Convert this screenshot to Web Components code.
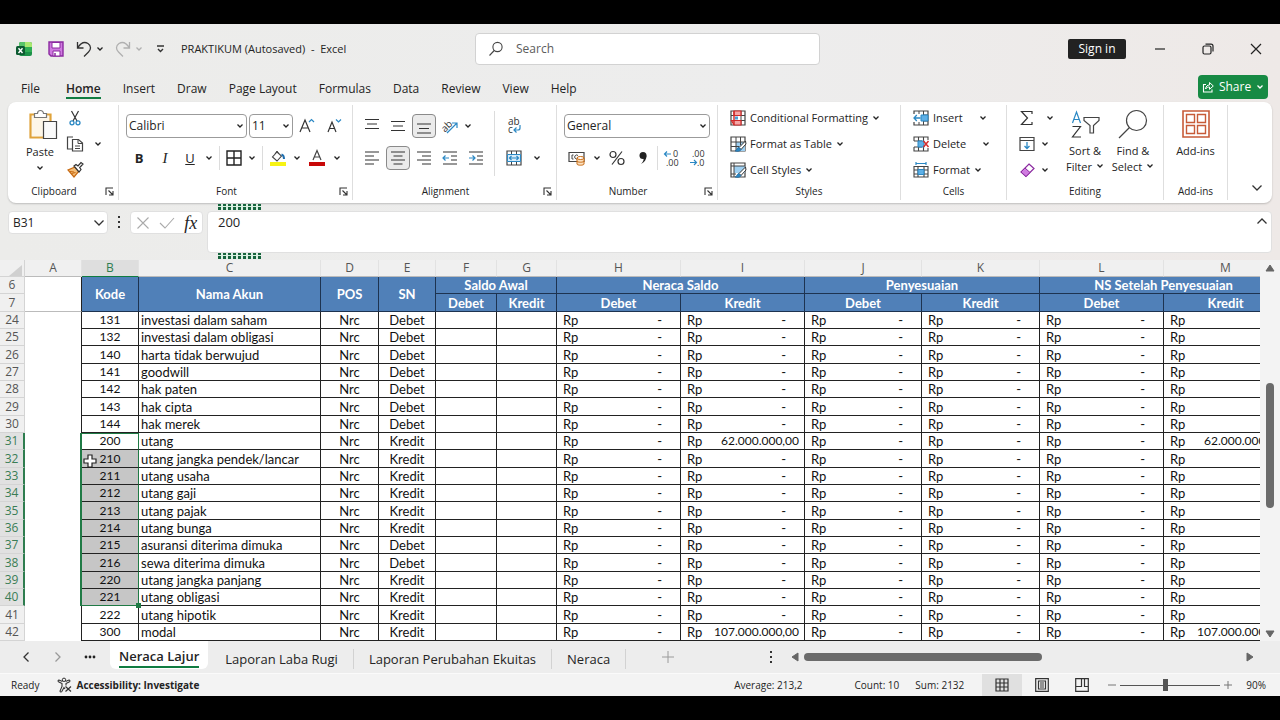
<!DOCTYPE html>
<html lang="en">
<head>
<meta charset="utf-8">
<title>PRAKTIKUM - Excel</title>
<style>
  html, body { margin: 0; height: 100%; background: #000; }
  body { box-sizing: border-box; padding: 24px 0; font: 11px/16px "Open Sans", "Noto Sans", sans-serif; color: #242424; }
</style>
</head>
<body>
<excel-window></excel-window>
<script>
const ICONS = {
  logo: [16, 16, '<rect x="3" y="1" width="13" height="14" rx="2" fill="#1c9148"/><path d="M5 1h4v5H3V3a2 2 0 0 1 2-2z" fill="#58c46a"/><path d="M9 1h5a2 2 0 0 1 2 2v3H9z" fill="#a9e86f"/><path d="M9 6h7v5H9z" fill="#2fae55"/><rect y="5" width="9" height="9" rx="1.500" fill="#0d5b31"/><path d="M2.500 7.200l4 4.800M6.500 7.200l-4 4.800" stroke="#fff" stroke-width="1.400"/>'],
  save: [16, 16, '<path d="M1 1h14v14H3l-2-2z" fill="#cf7be0" stroke="#8b2aa0" stroke-width="1.400"/><path d="M4 1.500h8V7H4zM5 10h7v5H5z" fill="#fff" stroke="#8b2aa0"/><path d="M7 12v3" stroke="#8b2aa0" stroke-width="1.500"/>'],
  undo: [16, 18, '<path d="M1.500 2v6h6M1.500 8C4 4 8 1 12 3.500c3.500 2.300 3 6 .5 8.500L8 16.500" fill="none" stroke="#333" stroke-width="1.300"/>'],
  redo: [16, 18, '<path d="M14.500 2v6h-6M14.500 8C12 4 8 1 4 3.500c-3.500 2.300-3 6-.5 8.500L8 16.500" fill="none" stroke="#b0b0b0" stroke-width="1.300"/>'],
  chev: [8, 6, '<path d="M1.500 1.500L4 4l2.500-2.500" fill="none" stroke="currentColor" stroke-width="1.300"/>'],
  chevL: [12, 8, '<path d="M1.500 1.500L6 6l4.500-4.500" fill="none" stroke="#333" stroke-width="1.300"/>'],
  chevUp: [12, 8, '<path d="M1.500 6.500L6 2l4.500 4.500" fill="none" stroke="#333" stroke-width="1.300"/>'],
  custom: [9, 8, '<path d="M1 1h7M2 4l2.500 2.500L7 4" fill="none" stroke="#333" stroke-width="1.400"/>'],
  search: [16, 16, '<circle cx="9.500" cy="6" r="4.600" fill="none" stroke="#444" stroke-width="1.100"/><path d="M6.200 9.500L1.500 14.500" stroke="#444" stroke-width="1.100"/>'],
  min: [12, 12, '<path d="M1 6h10" stroke="#222" stroke-width="1.200"/>'],
  restore: [12, 12, '<rect x="1" y="3" width="8" height="8" rx="1.500" fill="none" stroke="#222" stroke-width="1.200"/><path d="M3.500 1.200H9A2 2 0 0 1 11 3.200V8.500" fill="none" stroke="#222" stroke-width="1.200"/>'],
  close: [12, 12, '<path d="M1 1l10 10M11 1L1 11" stroke="#222" stroke-width="1.200"/>'],
  share: [12, 12, '<path d="M4 3.500H1.500V11H10V8.500" fill="none" stroke="#fff" stroke-width="1.100"/><path d="M3.500 8C4 5 5.500 4 7.500 4V1.500L11.300 5 7.500 8.300V6C6 6 4.600 6.500 3.500 8z" fill="none" stroke="#fff"/>'],
  paste: [36, 32, '<g transform="translate(6 0)"><path d="M2.500 5.500h20v23h-20z" fill="#fff" stroke="#e0a33a" stroke-width="2.200"/><path d="M4 7h17v20H4z" fill="#fdf6e8"/><path d="M6.500 8.500V4.500h3a3 3 0 0 1 6 0h3v4z" fill="#fff" stroke="#777" stroke-width="1.200"/><path d="M15.500 12.500h13v17h-13z" fill="#fafafa" stroke="#444" stroke-width="1.200"/></g>'],
  cut: [16, 16, '<path d="M4.500 1l5.500 10M11.500 1L6 11" stroke="#333" stroke-width="1.200"/><circle cx="5" cy="12.800" r="2" fill="none" stroke="#2b88c4" stroke-width="1.300"/><circle cx="11" cy="12.800" r="2" fill="none" stroke="#2b88c4" stroke-width="1.300"/>'],
  copy: [18, 18, '<path d="M6 14H1.500V2H7" fill="none" stroke="#444" stroke-width="1.200"/><path d="M6.500 4.500h6L16.500 8v8h-10z" fill="#fff" stroke="#444" stroke-width="1.200"/><path d="M12 4.500V8.500h4M9 11h5M9 13.500h5" fill="none" stroke="#444"/>'],
  painter: [18, 18, '<path d="M9 6l4 4-5 6L2 9z" fill="#f4bd77" stroke="#c76a12" stroke-width="1.200"/><path d="M4 10.500l4 .5M5.500 12.500l4-1" stroke="#c76a12"/><path d="M8 5l2-1.500 2 1.500 3-3.500L17 3l-3.300 3.500L15 8.500 13 11z" fill="#fff" stroke="#333" stroke-width="1.200"/>'],
  launch: [9, 9, '<path d="M1 8V1h7M3.500 3.500L8 8M8 4v4H4" fill="none" stroke="#333" stroke-width="1.100"/>'],
  grow: [18, 18, '<path d="M2 15L7 3l5 12M3.700 11h6.600" fill="none" stroke="#333" stroke-width="1.200"/><path d="M11 5l2.500-2.500L16 5" fill="none" stroke="#2b88c4" stroke-width="1.200"/>'],
  shrink: [18, 18, '<path d="M3 15L7 5l4 10M4.400 11.500h5.200" fill="none" stroke="#333" stroke-width="1.200"/><path d="M11 2.500L13.500 5 16 2.500" fill="none" stroke="#2b88c4" stroke-width="1.200"/>'],
  borders: [16, 16, '<path d="M1 1h14v14H1zM8 1v14M1 8h14" fill="none" stroke="#222" stroke-width="1.400"/>'],
  fill: [18, 18, '<path d="M8 3L3.500 8l4.500 4 4.500-5z" fill="#fff" stroke="#444" stroke-width="1.100"/><path d="M6 5l2-3 2 3" fill="none" stroke="#444"/><path d="M12.500 5.500c2 .5 2.500 2 2.500 4.500" fill="none" stroke="#1f6fb0" stroke-width="2"/><path d="M1 13h16v4H1z" fill="#f7f313"/>'],
  color: [18, 18, '<path d="M5 11L9 1.500 13 11M6.400 8h5.200" fill="none" stroke="#444" stroke-width="1.200"/><path d="M1 13h16v4H1z" fill="#c80808"/>'],
  top: [16, 16, '<path d="M1 1.500h14M3 6h10M1 10.500h14" stroke="#333" stroke-width="1.200"/>'],
  middle: [16, 16, '<path d="M1 3.500h14M3 8h10M1 12.500h14" stroke="#333" stroke-width="1.200"/>'],
  bottom: [16, 16, '<path d="M1 6h14M3 10.500h10M1 15h14" stroke="#333" stroke-width="1.200"/>'],
  orient: [18, 18, '<text x="0" y="9" transform="rotate(-45 6 8) translate(-1 3)" font-family="Open Sans" font-size="10" fill="#333">ab</text><path d="M6 16L16 6M11 6h5v5" fill="none" stroke="#2b88c4" stroke-width="1.200"/>'],
  wrap: [16, 18, '<text x="2" y="8" font-family="Open Sans" font-size="10" fill="#333">ab</text><text x="2" y="16" font-family="Open Sans" font-size="10" fill="#333">c</text><path d="M14 8v3c0 1.500-1 2-2 2H8M10.500 10.500L8 13l2.500 2.500" fill="none" stroke="#2b88c4" stroke-width="1.200"/>'],
  left: [16, 16, '<path d="M1 2h14M1 6h9M1 10h14M1 14h9" stroke="#333" stroke-width="1.200"/>'],
  center: [16, 16, '<path d="M1 2h14M3.500 6h9M1 10h14M3.500 14h9" stroke="#333" stroke-width="1.200"/>'],
  right: [16, 16, '<path d="M1 2h14M6 6h9M1 10h14M6 14h9" stroke="#333" stroke-width="1.200"/>'],
  outdent: [16, 16, '<path d="M1 2h14M9 6h6M9 10h6M1 14h14" stroke="#333" stroke-width="1.200"/><path d="M7 8H1M3.500 5.500L1 8l2.500 2.500" fill="none" stroke="#2b88c4" stroke-width="1.200"/>'],
  indent: [16, 16, '<path d="M1 2h14M9 6h6M9 10h6M1 14h14" stroke="#333" stroke-width="1.200"/><path d="M1 8h6M4.500 5.500L7 8l-2.500 2.500" fill="none" stroke="#2b88c4" stroke-width="1.200"/>'],
  merge: [16, 16, '<path d="M1 1h14v14H1z" fill="#fff" stroke="#444" stroke-width="1.200"/><path d="M5.500 1v3M10.500 1v3M5.500 12v3M10.500 12v3" stroke="#444"/><path d="M1.500 4.500h13v7h-13z" fill="#d7ecfa" stroke="#2b88c4"/><path d="M3.500 8h9M5.500 6l-2 2 2 2M10.500 6l2 2-2 2" fill="none" stroke="#2b88c4" stroke-width="1.200"/>'],
  account: [18, 16, '<path d="M1 2.500h15v9H1z" fill="#fff" stroke="#444" stroke-width="1.200"/><path d="M5.500 5H4v4h1.500M10 5.500a2 2 0 1 0 0 3" fill="none" stroke="#444"/><path d="M9 8h7v6c0 1.600-7 1.600-7 0z" fill="#fbe0c0" stroke="#c76a12"/><ellipse cx="12.500" cy="8" rx="3.500" ry="1.500" fill="#fff" stroke="#c76a12"/><path d="M9 11c0 1.600 7 1.600 7 0" fill="none" stroke="#c76a12"/>'],
  percent: [18, 18, '<circle cx="5" cy="5.500" r="3" fill="none" stroke="#333" stroke-width="1.200"/><circle cx="13" cy="12.500" r="3" fill="none" stroke="#333" stroke-width="1.200"/><path d="M14 2.500L4 15.500" stroke="#333" stroke-width="1.200"/>'],
  comma: [10, 16, '<circle cx="5" cy="5.500" r="3.500" fill="#222"/><path d="M8.500 5.500c0 4-2 7-5.500 8.500 2-2 3-4 2.500-6z" fill="#222"/>'],
  incdec: [18, 18, '<text x="10" y="8" font-family="Open Sans" font-size="9" fill="#333">0</text><text x="3" y="17" font-family="Open Sans" font-size="9" fill="#333">.00</text><path d="M8 5H1.500M4 2.500L1.500 5 4 7.500" fill="none" stroke="#2b88c4" stroke-width="1.200"/>'],
  decdec: [18, 18, '<text x="3" y="8" font-family="Open Sans" font-size="9" fill="#333">.00</text><text x="8" y="17" font-family="Open Sans" font-size="9" fill="#333">.0</text><path d="M1 13.500h6.500M5 11l2.500 2.500L5 16" fill="none" stroke="#2b88c4" stroke-width="1.200"/>'],
  cond: [16, 16, '<path d="M1 1h14v14H1z" fill="#fff" stroke="#444" stroke-width="1.200"/><path d="M1 5.500h14M1 10.500h14M11 1v14" stroke="#444"/><path d="M4 1h7v4.500H4zM1.500 10.500H11V15H4z" fill="#f4a6a6" stroke="#cf2a2a" stroke-width="1.200"/><path d="M4 1v14" stroke="#cf2a2a" stroke-width="1.400"/><path d="M5 6.500h3v3H5z" fill="#4a9fd8"/>'],
  fmtTable: [16, 16, '<path d="M1 1h14v14H1z" fill="#fff" stroke="#444" stroke-width="1.200"/><path d="M6 6h9v9H6z" fill="#9fd0f2"/><path d="M1 6h14M1 10.500h8M6 1v14M10.500 1v8" stroke="#444"/><path d="M15.500 5L9 11.500l2 2L16 8z" fill="#fff" stroke="#333"/><path d="M9 11.500c-2 0-2 3-4 3.500 3 1 6 0 6-1.500z" fill="#2b88c4" stroke="#1c5f94" stroke-width=".6"/>'],
  cellStyle: [16, 16, '<path d="M1 1h14v14H1z" fill="#fff" stroke="#444" stroke-width="1.200"/><path d="M4 4h11v7H4z" fill="#9fd0f2"/><path d="M1 4h14M4 1v14M1 12h5" stroke="#444"/><path d="M15.500 5L9 11.500l2 2L16 8z" fill="#fff" stroke="#333"/><path d="M9 11.500c-2 0-2 3-4 3.500 3 1 6 0 6-1.500z" fill="#2b88c4" stroke="#1c5f94" stroke-width=".6"/>'],
  insert: [16, 16, '<path d="M1 4V1h14v14H1v-3" fill="none" stroke="#444" stroke-width="1.200"/><path d="M6 1v3M10.500 1v14M6 12v3M10 5h5M10 11h5" stroke="#444"/><path d="M8 5h7v6H8z" fill="#5fb0e6" stroke="#2b88c4"/><path d="M7.500 8H1M3.800 5L1 8l2.800 3" fill="none" stroke="#2b88c4" stroke-width="1.300"/>'],
  del: [16, 16, '<path d="M1 5V1h14v3M1 11v4h14v-3M5.500 1v4M10.500 1v4M5.500 11v4M10.500 11v4M1 5h8M1 11h8" fill="none" stroke="#444" stroke-width="1.100"/><path d="M5 5h6v6H5z" fill="#5fb0e6" stroke="#2b88c4"/><path d="M10.500 5l5 6M15.500 5l-5 6" stroke="#d32f2f" stroke-width="1.500"/>'],
  format: [16, 16, '<path d="M1 4.500h14V15H1zM1 8h14M1 12h14M5 4.500V15M11 4.500V15" fill="#fff" stroke="#444" stroke-width="1.100"/><path d="M5 7.500h6v5H5z" fill="#5fb0e6" stroke="#2b88c4"/><path d="M3 1.500h10M3 0v3M13 0v3" stroke="#2b88c4" stroke-width="1.200"/>'],
  sum: [16, 16, '<path d="M13 4V1.500H2.500L8.500 8l-6 6.500H13V12" fill="none" stroke="#333" stroke-width="1.200"/>'],
  fillDown: [16, 16, '<path d="M1 1.500h14v13H1z" fill="#fff" stroke="#444" stroke-width="1.200"/><path d="M1 4.500h14" stroke="#444"/><path d="M8 6v6.500M5.500 10L8 12.500 10.500 10" fill="none" stroke="#2b88c4" stroke-width="1.300"/>'],
  eraser: [16, 16, '<path d="M10 2l5 4.500-8 8-5-4.500z" fill="#fff" stroke="#8b2aa0" stroke-width="1.200"/><path d="M6 6l5 4.500-4 4-5-4.500z" fill="#d07be0" stroke="#8b2aa0"/>'],
  sort: [30, 30, '<path d="M2.500 14L6.500 3l4 11M3.900 10.500h5.200" fill="none" stroke="#2b88c4" stroke-width="1.200"/><path d="M2.500 17.500h8L2.500 28h8.500" fill="none" stroke="#333" stroke-width="1.200"/><path d="M14 8.500h15v3l-5.500 5V24l-3.500 0v-7.500L14 11.500z" fill="#fff" stroke="#444" stroke-width="1.200"/>'],
  find: [30, 30, '<circle cx="18.500" cy="11.500" r="10" fill="none" stroke="#444" stroke-width="1.200"/><path d="M11.500 18.500L1 29" stroke="#444" stroke-width="1.200"/>'],
  addins: [28, 28, '<path d="M1 1h26v26H1z" fill="#fff" stroke="#c75b38" stroke-width="1.600"/><path d="M4.500 4.500h8v8h-8zM15.500 4.500h8v8h-8zM4.500 15.500h8v8h-8zM15.500 15.500h8v8h-8z" fill="none" stroke="#c75b38" stroke-width="1.400"/>'],
  dots: [4, 14, '<path d="M1 1h2v2H1zM1 6h2v2H1zM1 11h2v2H1z" fill="#333"/>'],
  more: [12, 4, '<circle cx="2" cy="2" r="1.400" fill="#222"/><circle cx="6" cy="2" r="1.400" fill="#222"/><circle cx="10" cy="2" r="1.400" fill="#222"/>'],
  cancel: [14, 14, '<path d="M1.500 1.500l11 11M12.500 1.500l-11 11" stroke="#aaa" stroke-width="1.100"/>'],
  check: [16, 12, '<path d="M1 6l5 5L15 1" fill="none" stroke="#aaa" stroke-width="1.100"/>'],
  prev: [8, 12, '<path d="M6.500 1.500L2 6l4.500 4.500" fill="none" stroke="#333" stroke-width="1.300"/>'],
  next: [8, 12, '<path d="M1.500 1.500L6 6l-4.500 4.500" fill="none" stroke="#999" stroke-width="1.300"/>'],
  plus: [12, 12, '<path d="M6 0v12M0 6h12" stroke="#9a9a9a"/>'],
  up: [10, 8, '<path d="M5 1l4 6H1z" fill="#666" stroke="#666" stroke-linejoin="round"/>'],
  down: [10, 8, '<path d="M5 7L1 1h8z" fill="#666" stroke="#666" stroke-linejoin="round"/>'],
  arrL: [8, 10, '<path d="M1 5l6-4v8z" fill="#666" stroke="#666" stroke-linejoin="round"/>'],
  arrR: [8, 10, '<path d="M7 5L1 1v8z" fill="#666" stroke="#666" stroke-linejoin="round"/>'],
  access: [16, 16, '<circle cx="7" cy="2.800" r="1.700" fill="none" stroke="#333"/><path d="M5.500 4.500L2 3C1 3 .8 4.300 1.500 4.700L5 6.500v3L3 14c0 1 1.300 1.300 1.800.5L7 10.500l1 1.500M8.500 4.500L12 3c1 0 1.200 1.300.5 1.700L9 6.500v2" fill="none" stroke="#333" stroke-width="1.100"/><path d="M8.500 9.500l5.500 5M14 9.500l-5.500 5" stroke="#333" stroke-width="1.200"/>'],
  viewGrid: [14, 14, '<path d="M1 1h12v12H1zM5 1v12M9 1v12M1 5h12M1 9h12" fill="none" stroke="#333" stroke-width="1.200"/>'],
  viewPage: [14, 14, '<path d="M.7.700h12.600v12.600H.7zM3.500 3h7v8h-7z" fill="none" stroke="#333" stroke-width="1.200"/><path d="M5 5h4M5 7h4M5 9h4" stroke="#333"/>'],
  viewBreak: [14, 14, '<path d="M.7.700h12.600v12.600H.7zM.7 8.500h5.800V.7M9.500.7v7.800h3.800" fill="none" stroke="#333" stroke-width="1.200"/>'],
  cursor: [14, 14, '<path d="M5 1h4v4h4v4H9v4H5V9H1V5h4z" fill="#fff" stroke="#222" stroke-width="1.200"/>']
};

/* Registers an element whose shadow tree is produced from its attributes. */
function component(name, css, html) {
  customElements.define(name, class extends HTMLElement {
    constructor() { super(); this.attachShadow({ mode: 'open' }); }
    connectedCallback() {
      const attr = (k, fallback = '') => this.getAttribute(k) ?? fallback;
      this.shadowRoot.innerHTML = '<style>*{box-sizing:border-box}button,input,select{font:inherit;color:inherit;margin:0;padding:0;border:0;background:none;outline:0}' + css + '</style>' + html(attr, this);
    }
  });
}

component('xl-icon', ':host{display:block;flex:none}svg{display:block;overflow:visible}', a => {
  const [w, h, body] = ICONS[a('name')];
  return `<svg width="${w}" height="${h}" viewBox="0 0 ${w} ${h}" aria-hidden="true">${body}</svg>`;
});

/* A ribbon command: icon and/or text, with an optional drop-down arrow. */
component('tool-button', `
  :host{display:block;flex:none}
  button{display:flex;align-items:center;justify-content:center;width:var(--w,26px);height:var(--h,24px);border-radius:4px;white-space:nowrap}
  :host([on]) button{background:#ebebeb;border:1px solid #8a8a8a;width:24px;margin:0 1px}
  :host([wide]) button{width:auto;gap:4px;height:26px}
  :host([tall]) button{flex-direction:column;width:var(--w);height:auto}
  xl-icon.c{margin-left:var(--cg,0)}
  :host([tall]) .c{margin:5px 0}`,
  a => `<button type="button" aria-label="${a('label')}">${a('icon') ? `<xl-icon name="${a('icon')}"></xl-icon>` : ''}<slot></slot>${a('arrow') ? '<xl-icon class="c" name="chev"></xl-icon>' : ''}</button>`);

component('drop-arrow', ':host{display:block;flex:none}button{display:flex;align-items:center;justify-content:center;width:var(--w,14px);height:24px}',
  a => `<button type="button" aria-label="${a('label', 'More')}"><xl-icon name="chev"></xl-icon></button>`);

component('combo-box', `
  :host{display:grid;align-items:center;height:24px;border:1px solid #9b9b9b;border-radius:4px;background:#fff}
  select,xl-icon{grid-area:1/1}
  select{appearance:none;width:100%;height:22px;padding:0 2px;font-size:12px}
  xl-icon{justify-self:end;margin-right:2px;pointer-events:none}`,
  a => `<select aria-label="${a('label')}"><option>${a('value')}</option></select><xl-icon name="chev"></xl-icon>`);

component('v-rule', ':host{display:block;flex:none;width:1px;margin:0 3px;background:#dcdcdc;align-self:stretch}', () => '');

component('ribbon-group', `
  :host{display:flex;flex-direction:column;border-right:1px solid #dedede;margin:3px 0;flex:none;width:var(--group-width)}
  .body{flex:1;display:flex;min-height:0}
  footer{flex:none;display:flex;align-items:center;height:18px;font-size:10px;line-height:18px}
  span{flex:1;text-align:center}
  button{width:18px;height:18px;display:grid;place-items:center}`,
  a => `<div class="body"><slot></slot></div><footer><span>${a('label')}</span>${a('launcher') ? `<button type="button" aria-label="${a('label')} settings"><xl-icon name="launch"></xl-icon></button>` : ''}</footer>`);

component('title-bar', `
  :host{display:grid;grid-template-columns:475fr 345fr 460fr;align-items:center;height:49px}
  .l{display:flex;align-items:center;padding-left:16px}
  .l h1{font:inherit;margin:0 0 0 16px;white-space:pre}
  .l button{display:grid;place-items:center;height:24px}
  .b1{width:16px;margin-left:16px}.b2{width:16px;margin-left:12px}.b3{width:16px}.b4{width:16px;margin-left:7px}.b6{width:10px;margin-left:8px}
  .dim{color:#b0b0b0}
  label{display:flex;align-items:center;gap:12px;height:32px;padding:0 12px;background:#fff;border:1px solid #d2d2d2;border-radius:4px}
  input{flex:1;min-width:0;font-size:12px}input::placeholder{color:#5c5c5c;opacity:1}
  .r{display:flex;justify-content:flex-end;align-items:center}
  .r button{width:48px;height:24px;display:grid;place-items:center}
  .r .sign{width:58px;height:20px;margin-right:10px;background:#222;color:#fff;font-size:12px;border-radius:2px}`,
  () => `<div class="l"><xl-icon name="logo"></xl-icon>
    <button class="b1" aria-label="Save"><xl-icon name="save"></xl-icon></button>
    <button class="b2" aria-label="Undo"><xl-icon name="undo"></xl-icon></button><button class="b3" aria-label="Undo list"><xl-icon name="chev"></xl-icon></button>
    <button class="b4" aria-label="Redo"><xl-icon name="redo"></xl-icon></button><button class="b3 dim" aria-label="Redo list"><xl-icon name="chev"></xl-icon></button>
    <button class="b6" aria-label="Customize toolbar"><xl-icon name="custom"></xl-icon></button>
    <h1>PRAKTIKUM (Autosaved)  -  Excel</h1></div>
  <label><xl-icon name="search"></xl-icon><input type="text" placeholder="Search" aria-label="Search"></label>
  <div class="r"><button class="sign">Sign in</button><button aria-label="Minimize"><xl-icon name="min"></xl-icon></button><button aria-label="Restore"><xl-icon name="restore"></xl-icon></button><button aria-label="Close"><xl-icon name="close"></xl-icon></button></div>`);

component('ribbon-tabs', `
  :host{display:flex;justify-content:space-between;height:29px;padding:2px 12px 0 21px;font-size:12px}
  nav{display:flex;gap:22px}
  a{color:inherit;text-decoration:none;line-height:20px;height:24px;padding-top:4px;white-space:nowrap}
  a:first-child{margin-right:4px}
  a.on{font-weight:600;border-bottom:2px solid #107c41}
  button{display:flex;align-items:center;justify-content:center;gap:5px;width:70px;height:24px;border-radius:4px;background:#178a44;color:#fff}`,
  () => `<nav>${['File', 'Home', 'Insert', 'Draw', 'Page Layout', 'Formulas', 'Data', 'Review', 'View', 'Help'].map(t => `<a href="#"${t === 'Home' ? ' class="on"' : ''}>${t}</a>`).join('')}</nav>
  <button type="button"><xl-icon name="share"></xl-icon>Share<xl-icon name="chev"></xl-icon></button>`);

component('ribbon-panel', `
  :host{display:flex;height:101px;margin:0 8px;background:#fff;border-radius:8px;box-shadow:0 1px 2px #0003}
  .col{display:flex;flex-direction:column}
  .row{display:flex;align-items:center}
  .rows{gap:8px;padding-top:9px}
  .font{padding-left:7px}.align{padding-left:6px}.num{padding-left:7px}
  .g2{gap:2px}
  .b{font-weight:700;font-size:13px}.i{font-style:italic;font-family:"Liberation Serif",serif;font-size:15px}.u{text-decoration:underline;font-size:13px}
  .end{flex:1;display:flex;justify-content:flex-end;align-items:flex-end;padding:0 9px 9px 0}
  .end button{height:12px}
  .lh{text-align:center;line-height:16px}
  .lh xl-icon{display:inline-block;vertical-align:2px;margin-left:4px}`,
  () => `
  <ribbon-group label="Clipboard" launcher="1" style="--group-width:111px">
    <div class="col" style="padding:4px 0 0 12px"><tool-button tall icon="paste" arrow="1" label="Paste" style="--w:40px"><span style="margin-top:3px">Paste</span></tool-button></div>
    <div class="col" style="padding-left:2px">
      <tool-button icon="cut" label="Cut" style="--h:26px"></tool-button>
      <div class="row"><tool-button icon="copy" label="Copy" style="--h:26px"></tool-button><drop-arrow style="--w:20px"></drop-arrow></div>
      <tool-button icon="painter" label="Format Painter" style="--h:26px"></tool-button>
    </div>
  </ribbon-group>
  <ribbon-group label="Font" launcher="1" style="--group-width:234px">
    <div class="col rows font">
      <div class="row g2"><combo-box label="Font" value="Calibri" style="width:121px"></combo-box><combo-box label="Font size" value="11" style="width:44px"></combo-box>
        <tool-button icon="grow" label="Increase font size" style="--w:24px"></tool-button><tool-button icon="shrink" label="Decrease font size"></tool-button></div>
      <div class="row"><tool-button label="Bold"><span class="b">B</span></tool-button><tool-button label="Italic"><span class="i">I</span></tool-button><tool-button label="Underline" style="--w:24px"><span class="u">U</span></tool-button><drop-arrow></drop-arrow>
        <v-rule></v-rule><tool-button icon="borders" label="Borders" style="--w:22px"></tool-button><drop-arrow></drop-arrow>
        <v-rule></v-rule><tool-button icon="fill" label="Fill colour" style="--w:24px"></tool-button><drop-arrow></drop-arrow><tool-button icon="color" label="Font colour"></tool-button><drop-arrow></drop-arrow></div>
    </div>
  </ribbon-group>
  <ribbon-group label="Alignment" launcher="1" style="--group-width:204px">
    <div class="col rows align">
      <div class="row"><tool-button icon="top" label="Top align"></tool-button><tool-button icon="middle" label="Middle align"></tool-button><tool-button on icon="bottom" label="Bottom align"></tool-button><tool-button icon="orient" label="Orientation"></tool-button><drop-arrow style="--w:10px"></drop-arrow></div>
      <div class="row"><tool-button icon="left" label="Align left"></tool-button><tool-button on icon="center" label="Center"></tool-button><tool-button icon="right" label="Align right"></tool-button><tool-button icon="outdent" label="Decrease indent"></tool-button><tool-button icon="indent" label="Increase indent"></tool-button></div>
    </div>
    <v-rule style="margin:6px 6px 6px 5px"></v-rule>
    <div class="col rows"><tool-button icon="wrap" label="Wrap text"></tool-button><div class="row"><tool-button icon="merge" label="Merge and center"></tool-button><drop-arrow style="--w:20px"></drop-arrow></div></div>
  </ribbon-group>
  <ribbon-group label="Number" launcher="1" style="--group-width:161px">
    <div class="col rows num">
      <combo-box label="Number format" value="General" style="width:146px"></combo-box>
      <div class="row"><tool-button icon="account" label="Accounting format"></tool-button><drop-arrow></drop-arrow><tool-button icon="percent" label="Percent style"></tool-button><tool-button icon="comma" label="Comma style"></tool-button><v-rule style="margin:0 1px"></v-rule><tool-button icon="incdec" label="Increase decimal"></tool-button><tool-button icon="decdec" label="Decrease decimal"></tool-button></div>
    </div>
  </ribbon-group>
  <ribbon-group label="Styles" style="--group-width:183px"><div class="col" style="padding-left:12px">
    <tool-button wide icon="cond" arrow="1" label="Conditional Formatting">Conditional Formatting</tool-button>
    <tool-button wide icon="fmtTable" arrow="1" label="Format as Table">Format as Table</tool-button>
    <tool-button wide icon="cellStyle" arrow="1" label="Cell Styles">Cell Styles</tool-button></div></ribbon-group>
  <ribbon-group label="Cells" style="--group-width:106px"><div class="col" style="padding-left:12px">
    <tool-button wide icon="insert" arrow="1" label="Insert" style="--cg:12px">Insert</tool-button>
    <tool-button wide icon="del" arrow="1" label="Delete" style="--cg:12px">Delete</tool-button>
    <tool-button wide icon="format" arrow="1" label="Format">Format</tool-button></div></ribbon-group>
  <ribbon-group label="Editing" style="--group-width:157px">
    <div class="col" style="padding-left:7px;width:54px">
      <div class="row"><tool-button icon="sum" label="AutoSum" style="--h:26px"></tool-button><drop-arrow style="--w:20px"></drop-arrow></div>
      <div class="row"><tool-button icon="fillDown" label="Fill" style="--h:26px"></tool-button><drop-arrow style="--w:10px"></drop-arrow></div>
      <div class="row"><tool-button icon="eraser" label="Clear" style="--h:26px"></tool-button><drop-arrow style="--w:10px"></drop-arrow></div></div>
    <div class="row" style="padding-top:4px;align-items:flex-start">
      <tool-button tall icon="sort" label="Sort and Filter" style="--w:48px"><span class="lh" style="margin-top:4px">Sort &amp;<br>Filter<xl-icon name="chev"></xl-icon></span></tool-button>
      <tool-button tall icon="find" label="Find and Select" style="--w:48px"><span class="lh" style="margin-top:4px">Find &amp;<br>Select<xl-icon name="chev"></xl-icon></span></tool-button></div>
  </ribbon-group>
  <ribbon-group label="Add-ins" style="--group-width:64px"><div class="col" style="padding-top:5px"><tool-button tall icon="addins" label="Add-ins" style="--w:63px"><span style="margin-top:5px">Add-ins</span></tool-button></div></ribbon-group>
  <div class="end"><button type="button" aria-label="Collapse ribbon"><xl-icon name="chevL"></xl-icon></button></div>`);

component('formula-bar', `
  :host{display:flex;height:57px;padding:8px 8px 7px;align-items:flex-start;font-size:12px}
  .box{display:flex;align-items:center;height:23px;background:#fff;border:1px solid #e0e0e0;border-radius:4px}
  .name{width:100px;padding:0 2px 0 4px}.name input{flex:1;min-width:0}
  .dots{display:grid;place-items:center;width:22px;height:22px}
  .fx{width:73px;justify-content:space-around}
  .fx button,.name button,.f button{display:grid;place-items:center;height:18px}
  .fx i{font:italic 400 18px/18px "Liberation Serif",serif}
  .f{position:relative;flex:1;height:42px;margin-left:4px;align-items:flex-start;padding:0 3px 0 10px}
  .f input{flex:1;min-width:0;height:20px;font-size:13px}
  .f::before,.f::after{content:"";position:absolute;left:10px;width:43px;height:6px;background:linear-gradient(#0000 2px,#d9f0e2 2px 3px,#0000 3px),repeating-linear-gradient(90deg,#17643d 0 3px,#d9f0e2 3px 5px)}
  .f::before{top:-8px}.f::after{bottom:-7px}`,
  () => `<div class="box name"><input aria-label="Name box" value="B31"><button type="button" aria-label="Names"><xl-icon name="chevL"></xl-icon></button></div>
  <div class="dots"><xl-icon name="dots"></xl-icon></div>
  <div class="box fx"><button aria-label="Cancel"><xl-icon name="cancel"></xl-icon></button><button aria-label="Enter"><xl-icon name="check"></xl-icon></button><button aria-label="Insert function"><i>fx</i></button></div>
  <div class="box f"><input aria-label="Formula" value="200"><button type="button" aria-label="Collapse formula bar"><xl-icon name="chevUp"></xl-icon></button></div>`);

const ROWS = [
  [24, 131, 'investasi dalam saham', 'Debet'], [25, 132, 'investasi dalam obligasi', 'Debet'],
  [26, 140, 'harta tidak berwujud', 'Debet'], [27, 141, 'goodwill', 'Debet'], [28, 142, 'hak paten', 'Debet'],
  [29, 143, 'hak cipta', 'Debet'], [30, 144, 'hak merek', 'Debet'], [31, 200, 'utang', 'Kredit', '62.000.000,00'],
  [32, 210, 'utang jangka pendek/lancar', 'Kredit'], [33, 211, 'utang usaha', 'Kredit'], [34, 212, 'utang gaji', 'Kredit'],
  [35, 213, 'utang pajak', 'Kredit'], [36, 214, 'utang bunga', 'Kredit'], [37, 215, 'asuransi diterima dimuka', 'Debet'],
  [38, 216, 'sewa diterima dimuka', 'Debet'], [39, 220, 'utang jangka panjang', 'Kredit'], [40, 221, 'utang obligasi', 'Kredit'],
  [41, 222, 'utang hipotik', 'Kredit'], [42, 300, 'modal', 'Kredit', '107.000.000,00']
];
const COLS = [25, 57, 57, 182, 58, 57, 61, 60, 124, 124, 117, 118, 124, 124];
const money = v => `<td><div class="m"><span>Rp</span><span class="${v ? 'v' : 'd'}">${v || '-'}</span></div></td>`;
const dataRow = ([n, code, name, sn, amount]) => {
  const sel = n >= 31 && n <= 40;
  return `<tr${sel ? ` class="sel${n === 31 ? ' first' : ''}${n === 40 ? ' last' : ''}"` : ''}><th scope="row">${n}</th><td class="a"></td><td class="k">${code}${n === 40 ? '<i></i>' : ''}</td><td class="n">${name}</td><td class="c">Nrc</td><td class="c">${sn}</td><td></td><td></td>${money()}${money(amount)}${money()}${money()}${money()}${money(amount || ' ')}</tr>`;
};

component('sheet-grid', `
  :host{display:flex;flex:1;min-height:0;overflow:hidden}
  .view{flex:1;min-width:0;overflow:hidden;position:relative;background:#fff}
  table{table-layout:fixed;width:1288px;border-collapse:separate;border-spacing:0;font:13px/16px Lato,"Open Sans",sans-serif;font-variant-ligatures:none;color:#111}
  th,td{padding:0;height:17px;line-height:16px;overflow:hidden;white-space:nowrap;border:0 solid #222;border-width:0 1px 1px 0}
  tbody tr:nth-child(3n) :is(th,td){height:18px}
  .cols th{background:#f0f0f0;font:400 12px/16px "Open Sans",sans-serif;color:#555;height:17px;border-color:#e2e2e2;border-bottom-color:#bbb}
  .cols .on{background:#dedede;color:#2e7d4f;border-bottom-color:#107c41}
  .cols svg{display:block;margin:5px 0 0 9px}
  tr>th:first-child{background:#f0f0f0;font:400 12px/16px "Open Sans",sans-serif;color:#555;border-color:#d4d4d4}
  .h th:not(:first-child){background:#5080b8;color:#fff;font-weight:700;border-color:#1d3350}
  .h .t{border-bottom-color:#5080b8}
  .h td{border-bottom:0}.h.two td{border-bottom:1px solid #bbb}
  .h.two :is(th,td){height:18px}
  .a{border-bottom:0}
  .k{text-align:center;font-size:12px}.c{text-align:center}.n{padding-left:2px}
  .m{display:flex;justify-content:space-between;padding:0 5px 0 6px}
  .d{margin-right:13px}.v{font-size:12px}
  .sel>th:first-child{background:#e1e1e1;color:#3a7d55;border-right:2px solid #2e7d4f}
  .sel .a{border-right:2px solid #1f7a45}
  .sel .k{background:#c6c6c6;border-right-color:#1f7a45}
  .first .k{background:#fff;box-shadow:inset 0 1px #1f7a45}
  .last .k{border-bottom-color:#1f7a45;position:relative;overflow:visible}
  .last .k i{position:absolute;right:-3px;bottom:-3px;width:5px;height:5px;background:#1f7a45}
  .cur{position:absolute;left:83px;top:194px}
  .bar{display:flex;flex-direction:column;align-items:center;width:20px;padding:4px 0 3px;background:#f3f3f3}
  .thumb{flex:124;width:8px;border-radius:4px;background:#6b6b6b}`,
  () => `<div class="view"><table><colgroup>${COLS.map(w => `<col style="width:${w}px">`).join('')}</colgroup>
  <thead><tr class="cols"><th><svg width="13" height="11"><path d="M13 0v11H0z" fill="#d0d0d0"/></svg></th>${[...'ABCDEFGHIJKLM'].map(c => `<th scope="col"${c === 'B' ? ' class="on"' : ''}>${c}</th>`).join('')}</tr>
  <tr class="h"><th>6</th><td></td><th class="t" rowspan="2">Kode</th><th class="t" rowspan="2">Nama Akun</th><th class="t" rowspan="2">POS</th><th class="t" rowspan="2">SN</th><th colspan="2">Saldo Awal</th><th colspan="2">Neraca Saldo</th><th colspan="2">Penyesuaian</th><th colspan="2">NS Setelah Penyesuaian</th></tr>
  <tr class="h two"><th>7</th><td></td>${'<th class="t">Debet</th><th class="t">Kredit</th>'.repeat(4)}</tr></thead>
  <tbody>${ROWS.map(dataRow).join('')}<tr><th></th><td class="a"></td>${'<td></td>'.repeat(12)}</tr></tbody></table><xl-icon class="cur" name="cursor"></xl-icon></div>
  <div class="bar"><xl-icon name="up"></xl-icon><div style="flex:110"></div><div class="thumb"></div><div style="flex:121"></div><xl-icon name="down"></xl-icon></div>`);

component('sheet-tabs', `
  :host{display:flex;height:32px;background:#ededed;font-size:13px}
  button{display:grid;place-items:center;width:32px;height:32px}
  nav{display:flex;margin-left:4px}
  a{display:block;color:inherit;text-decoration:none;white-space:nowrap;padding:0 15px;line-height:20px;height:20px;margin-top:8px;border-right:1px solid #d2d2d2}
  a.on{height:28px;margin:0 2px 0 0;padding:5px 9px 0;background:#fff;border:0;border-radius:0 0 6px 6px;font-weight:600}
  a.on span{display:block;border-bottom:2px solid #107c41}
  .add{margin-left:26px}
  .dots{width:20px;margin-right:10px}
  .track{flex:1;padding:0 9px 0 5px}
  .thumb{width:55%;height:8px;border-radius:4px;background:#6b6b6b}
  .right{display:flex;width:519px;align-items:center}
  .gap{flex:1}`,
  () => `<div style="width:10px"></div><button aria-label="Previous sheet"><xl-icon name="prev"></xl-icon></button><button aria-label="Next sheet"><xl-icon name="next"></xl-icon></button><button aria-label="All sheets"><xl-icon name="more"></xl-icon></button>
  <nav><a class="on" href="#"><span>Neraca Lajur</span></a><a href="#">Laporan Laba Rugi</a><a href="#">Laporan Perubahan Ekuitas</a><a href="#">Neraca</a></nav>
  <button class="add" aria-label="New sheet"><xl-icon name="plus"></xl-icon></button><div class="gap"></div>
  <div class="right"><button class="dots" aria-label="Resize"><xl-icon name="dots"></xl-icon></button><xl-icon name="arrL"></xl-icon><div class="track"><div class="thumb"></div></div><xl-icon name="arrR" style="margin-right:26px"></xl-icon></div>`);

component('status-bar', `
  :host{display:flex;align-items:center;height:23px;background:#f3f3f3;font-size:10px;padding:0 14px 0 11px;border-top:1px solid #fafafa;white-space:nowrap}
  b{margin-left:3px}
  .gap{flex:1}
  button{display:grid;place-items:center;width:40px;height:22px}
  .on{background:#e0e0e0}
  .s{width:16px}
  input{appearance:none;width:100px;height:16px;background:linear-gradient(#555,#555) center/100% 1px no-repeat}
  input::-webkit-slider-thumb{appearance:none;width:5px;height:12px;background:#555}`,
  () => `<span>Ready</span><xl-icon name="access" style="margin-left:18px"></xl-icon><b>Accessibility: Investigate</b><div class="gap"></div>
  <span style="margin-right:52px">Average: 213,2</span><span style="margin-right:16px">Count: 10</span><span style="margin-right:18px">Sum: 2132</span>
  <button class="on" aria-label="Normal view"><xl-icon name="viewGrid"></xl-icon></button><button aria-label="Page layout view"><xl-icon name="viewPage"></xl-icon></button><button aria-label="Page break view"><xl-icon name="viewBreak"></xl-icon></button>
  <button class="s" aria-label="Zoom out" style="margin-left:2px"><svg width="8" height="8"><path d="M0 4h8" stroke="#777"/></svg></button><input type="range" aria-label="Zoom" min="0" max="100" value="45"><button class="s" aria-label="Zoom in"><svg width="8" height="8"><path d="M0 4h8M4 0v8" stroke="#777"/></svg></button><span style="margin-left:10px">90%</span>`);

component('excel-window', ':host{display:flex;flex-direction:column;height:100%;overflow:hidden;background:linear-gradient(90deg,#ececea 0,#ededed 60%,#eee9e7 100%)}',
  () => '<title-bar></title-bar><ribbon-tabs></ribbon-tabs><ribbon-panel></ribbon-panel><formula-bar></formula-bar><sheet-grid></sheet-grid><sheet-tabs></sheet-tabs><status-bar></status-bar>');
</script>
</body>
</html>
